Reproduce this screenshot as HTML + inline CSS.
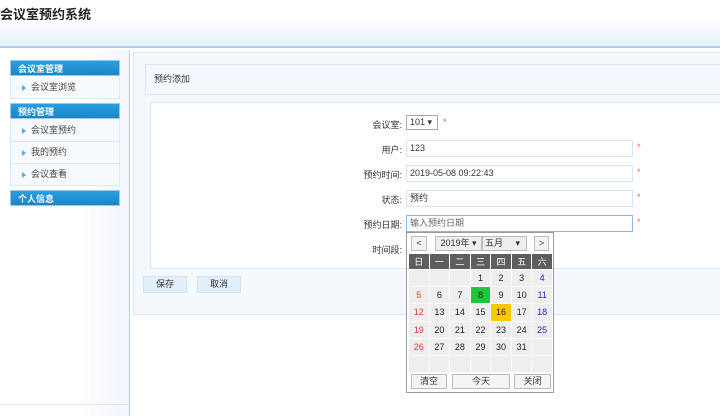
<!DOCTYPE html>
<html><head><meta charset="utf-8"><style>
*{margin:0;padding:0;box-sizing:border-box}
body{width:720px;height:416px;overflow:hidden;background:#fff;font-family:"Liberation Sans","Noto Sans CJK SC",sans-serif;font-size:9px;color:#333;position:relative}
.a{position:absolute}
.title{left:0;top:4px;font-size:13px;font-weight:bold;color:#222}
.band{left:0;top:20px;width:720px;height:28px;background:linear-gradient(#fff,#e6f1fc);border-bottom:2px solid #a9cdee}
.side{left:0;top:50px;width:130px;height:366px;background:linear-gradient(90deg,#fff 62%,#fdfafd 72%,#f0f6fd);border-right:1px solid #b6cfe0}
.mh{position:absolute;left:10px;width:110px;height:16px;background:linear-gradient(#2a9ee0,#1a86c8);color:#fff;font-weight:bold;font-size:9px;line-height:16px;padding-left:7px;border:1px solid #9cc8e8}
.mi{position:absolute;left:10px;width:110px;height:22px;background:#f7fafd;border:1px solid #dde9f2;border-top:none;line-height:21px;padding-left:20px;color:#444}
.mi:before{content:"";position:absolute;left:11px;top:8px;border-left:4px solid #5aa6dc;border-top:3px solid transparent;border-bottom:3px solid transparent}
.panel{left:133px;top:52px;width:600px;height:263px;background:#f5f9fe;border:1px solid #d5e7f8}
.tbox{left:145px;top:64px;width:600px;height:31px;background:#f5f9fe;border:1px solid #d5e7f8;line-height:29px;padding-left:8px}
.fbox{left:150px;top:102px;width:600px;height:167px;background:#fff;border:1px solid #d5e7f8}
.lbl{width:100px;text-align:right;left:302px;color:#333}
.inp{left:406px;width:227px;height:17px;border:1px solid #d3e6fb;background:#fff;line-height:15px;padding-left:3px}
.star{left:637px;color:#f55;font-size:9px}
.btn{top:276px;width:44px;height:17px;background:#e3f0fc;border:1px solid #d0e4f6;text-align:center;line-height:15px}
.cal{left:406px;top:232px;width:148px;height:161px;background:#fff;border:1px solid #999}
.cal table{position:absolute;left:1px;top:20px;border-collapse:separate;border-spacing:1px}
.cal td{width:19.7px;height:16.2px;background:#eee;text-align:center;font-size:9px;color:#222;padding:0}
.cal th{width:19.7px;height:15px;background:#5e5e5e;color:#fff;font-weight:normal;font-size:9px}
.r{color:#e33!important}.b{color:#22e!important}
.cb{position:absolute;height:15px;border:1px solid #bbb;background:#f4f4f4;text-align:center;line-height:13px;font-size:9px}
</style></head><body>
<div class="a title">会议室预约系统</div>
<div class="a band"></div>
<div class="a side">
<div class="mh" style="top:10px">会议室管理</div>
<div class="mi" style="top:27px">会议室浏览</div>
<div class="mh" style="top:53px">预约管理</div>
<div class="mi" style="top:70px">会议室预约</div>
<div class="mi" style="top:92px">我的预约</div>
<div class="mi" style="top:114px">会议查看</div>
<div class="mh" style="top:140px">个人信息</div>
<div style="position:absolute;left:0;top:354px;width:129px;height:1px;background:#dde8f2"></div>
</div>
<div class="a panel"></div>
<div class="a tbox">预约添加</div>
<div class="a fbox"></div>
<div class="a lbl" style="top:118px">会议室:</div>
<div class="a" style="left:406px;top:115px;width:32px;height:15px;border:1px solid #aaa;background:#fff;line-height:13px;padding-left:3px">101 ▾</div>
<div class="a star" style="left:443px;top:117px">*</div>
<div class="a lbl" style="top:143px">用户:</div>
<div class="a inp" style="top:140px">123</div><div class="a star" style="top:142px">*</div>
<div class="a lbl" style="top:168px">预约时间:</div>
<div class="a inp" style="top:165px">2019-05-08 09:22:43</div><div class="a star" style="top:167px">*</div>
<div class="a lbl" style="top:193px">状态:</div>
<div class="a inp" style="top:190px">预约</div><div class="a star" style="top:192px">*</div>
<div class="a lbl" style="top:218px">预约日期:</div>
<div class="a inp" style="top:215px;border-color:#8db8ee;color:#666">输入预约日期</div><div class="a star" style="top:217px">*</div>
<div class="a lbl" style="top:243px">时间段:</div>
<div class="a btn" style="left:143px">保存</div>
<div class="a btn" style="left:197px">取消</div>
<div class="a cal">
<div class="cb" style="left:4px;top:3px;width:16px">&lt;</div>
<div class="cb" style="left:28px;top:3px;width:47px;background:#eee">2019年 ▾</div>
<div class="cb" style="left:75px;top:3px;width:45px;background:#eee;text-align:left;padding-left:2px">五月 &nbsp; &nbsp; ▾</div>
<div class="cb" style="left:127px;top:3px;width:15px">&gt;</div>
<table>
<tr><th>日</th><th>一</th><th>二</th><th>三</th><th>四</th><th>五</th><th>六</th></tr>
<tr><td></td><td></td><td></td><td>1</td><td>2</td><td>3</td><td class="b">4</td></tr>
<tr><td class="r">5</td><td>6</td><td>7</td><td style="background:#1ec63a">8</td><td>9</td><td>10</td><td class="b">11</td></tr>
<tr><td class="r">12</td><td>13</td><td>14</td><td>15</td><td style="background:#fcc800">16</td><td>17</td><td class="b">18</td></tr>
<tr><td class="r">19</td><td>20</td><td>21</td><td>22</td><td>23</td><td>24</td><td class="b">25</td></tr>
<tr><td class="r">26</td><td>27</td><td>28</td><td>29</td><td>30</td><td>31</td><td></td></tr>
<tr><td></td><td></td><td></td><td></td><td></td><td></td><td></td></tr>
</table>
<div class="cb" style="left:4px;top:141px;width:36px">清空</div>
<div class="cb" style="left:45px;top:141px;width:58px">今天</div>
<div class="cb" style="left:107px;top:141px;width:37px">关闭</div>
</div>
</body></html>
